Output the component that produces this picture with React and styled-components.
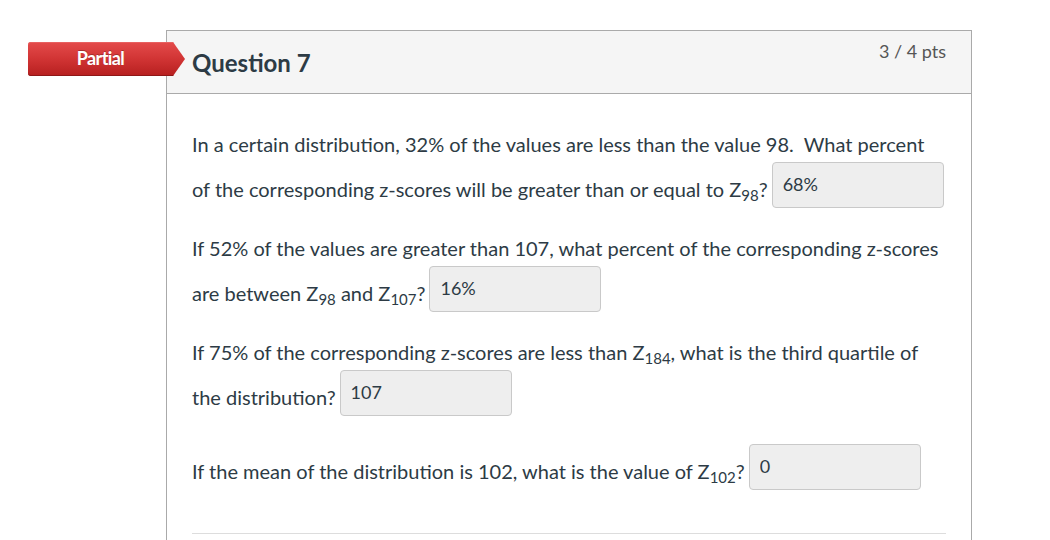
import React from "react";
import styled, { createGlobalStyle } from "styled-components";

const GlobalStyle = createGlobalStyle`
  html, body {
    margin: 0;
    padding: 0;
    background: #fff;
  }
  body {
    font-family: Lato, "Open Sans", sans-serif;
    color: #2d3b45;
  }
`;

const Page = styled.div`
  padding: 30px 0 0 166px;
  height: 540px;
  box-sizing: border-box;
  overflow: hidden;
`;

const Card = styled.div`
  position: relative;
  width: 806px;
  min-height: 600px;
  box-sizing: border-box;
  border: 1px solid #aaa;
  background: #fff;
`;

const Badge = styled.div`
  position: absolute;
  left: -139px;
  top: 11px;
  width: 157px;
  height: 34px;
  box-sizing: border-box;
  padding: 0 12px 3px 0;
  display: flex;
  align-items: center;
  justify-content: center;
  background: linear-gradient(to bottom, #e44b4b 0%, #d13434 50%, #b61f1f 100%);
  border-radius: 3px 0 0 3px;
  clip-path: polygon(0 0, calc(100% - 12px) 0, 100% 50%, calc(100% - 12px) 100%, 0 100%);
  box-shadow: inset 0 -1px 0 #8f1717, inset 0 1px 0 #e86060;
  color: #fff;
  font-size: 18px;
  font-weight: 700;
  letter-spacing: -0.6px;
  text-shadow: 0 -1px 0 rgba(0, 0, 0, 0.25);
`;

const Header = styled.div`
  height: 63px;
  box-sizing: border-box;
  padding: 10px 25px 0;
  display: flex;
  justify-content: space-between;
  align-items: flex-start;
  background: #f5f5f5;
  border-bottom: 1px solid #aaa;
`;

const Title = styled.h2`
  margin: 7px 0 0;
  font-size: 24px;
  font-weight: 700;
  color: #2d3b45;
`;

const Points = styled.div`
  font-size: 18px;
  font-weight: 400;
  color: #555;
  line-height: 21.6px;
`;

const Body = styled.div`
  padding: 35px 25px 0;
`;

const Para = styled.p`
  margin: 0 0 25px;
  font-size: 20px;
  line-height: 30px;
`;

const Sub = styled.sub`
  font-size: 15px;
  line-height: 0;
  vertical-align: -4px;
`;

const Answer = styled.input`
  width: 172px;
  height: 46px;
  box-sizing: border-box;
  margin: 3px 0 0 4px;
  padding: 10px 10px 13px;
  vertical-align: 6px;
  border: 1px solid #c9c9c9;
  border-radius: 4px;
  background: #eeeeee;
  font-family: Lato, "Open Sans", sans-serif;
  font-size: 18px;
  line-height: 21px;
  color: #2d3b45;
  outline: none;
`;

const Divider = styled.div`
  margin-top: 43px;
  height: 1px;
  background: #dddddd;
`;

const Z = ({ n }) => (
  <>
    Z<Sub>{n}</Sub>
  </>
);

export default function App() {
  return (
    <>
      <GlobalStyle />
      <Page>
        <Card>
          <Badge>Partial</Badge>
          <Header>
            <Title>Question 7</Title>
            <Points>3 / 4 pts</Points>
          </Header>
          <Body>
            <Para>
              In a certain distribution, 32% of the values are less than the value 98.&nbsp; What
              percent of the corresponding z-scores will be greater than or equal to <Z n="98" />?
              <Answer readOnly defaultValue="68%" />
            </Para>
            <Para>
              If 52% of the values are greater than 107, what percent of the corresponding z-scores
              are between <Z n="98" /> and <Z n="107" />?
              <Answer readOnly defaultValue="16%" />
            </Para>
            <Para>
              If 75% of the corresponding z-scores are less than <Z n="184" />, what is the third
              quartile of the distribution?
              <Answer readOnly defaultValue="107" />
            </Para>
            <Para>
              If the mean of the distribution is 102, what is the value of <Z n="102" />?
              <Answer readOnly defaultValue="0" />
            </Para>
            <Divider />
          </Body>
        </Card>
      </Page>
    </>
  );
}
